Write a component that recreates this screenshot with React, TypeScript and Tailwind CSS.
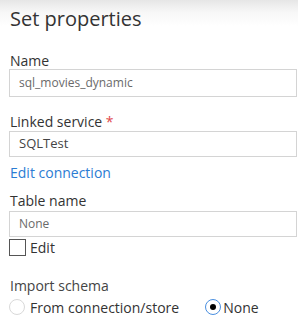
export default function App() {
  return (
    <div
      className="h-[336px] w-[298px] overflow-hidden bg-[linear-gradient(to_bottom,#e6e6e6_0px,#f7f7f7_12px,#ffffff_26px)] pl-[9px] pr-[1px] text-[#333]"
      style={{ fontFamily: '"Open Sans", "Noto Sans", sans-serif' }}
    >
      <h1 className="pl-[1px] pt-[5px] text-[20px] leading-[28px] font-normal text-[#333]">Set properties</h1>

      <div className="mt-[19px] pl-[1px] text-[14px] leading-[17px]">Name</div>
      <div className="flex h-[28px] items-center border border-[#d4d4d4] bg-white pl-[9px] text-[12px] text-[#6a6a6a]">
        sql_movies_dynamic
      </div>

      <div className="mt-[16px] pl-[1px] text-[14px] leading-[18px]">
        Linked service <span className="text-[#e0484c]">*</span>
      </div>
      <div className="flex h-[26px] items-center border border-[#d4d4d4] bg-white pl-[9px] text-[13px] text-[#444]">
        SQLTest
      </div>

      <div className="mt-[6px] pl-[1px] text-[14px] leading-[20px] text-[#2b7cd3]">Edit connection</div>

      <div className="mt-[8px] pl-[1px] text-[14px] leading-[20px]">Table name</div>
      <div className="flex h-[26px] items-center border border-[#d4d4d4] bg-white pl-[9px] text-[12px] text-[#6a6a6a]">
        None
      </div>

      <label className="mt-[1px] flex h-[18px] items-center gap-[4px] text-[14px] text-[#333]">
        <span className="block h-[17px] w-[17px] border border-[#555] bg-white" />
        Edit
      </label>

      <div className="mt-[21px] pl-[1px] text-[14px] leading-[18px] text-[#444]">Import schema</div>
      <div className="mt-[3px] flex h-[18px] items-center text-[14px] text-[#333]">
        <span className="block h-[16px] w-[16px] rounded-full border border-[#d9d9d9] bg-white" />
        <span className="ml-[5px]">From connection/store</span>
        <span className="ml-[26px] flex h-[16px] w-[16px] items-center justify-center rounded-full border-[1.5px] border-[#4a8fe0] bg-white">
          <span className="block h-[6px] w-[6px] rounded-full bg-black" />
        </span>
        <span className="ml-[2px]">None</span>
      </div>
    </div>
  );
}
